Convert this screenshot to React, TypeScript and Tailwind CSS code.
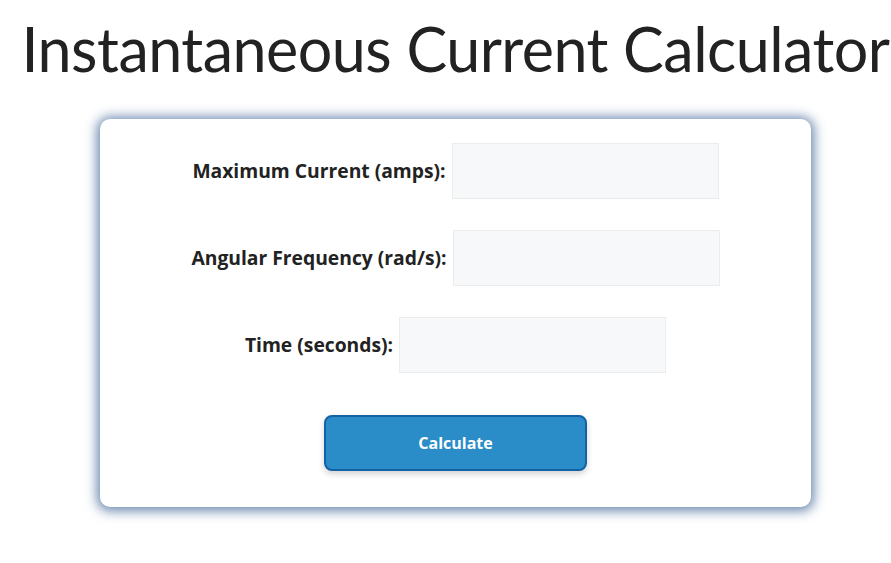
export default function App() {
  const fields = [
    { label: 'Maximum Current (amps):' },
    { label: 'Angular Frequency (rad/s):' },
    { label: 'Time (seconds):' },
  ]

  return (
    <div className="min-h-screen bg-white pl-[20px] font-['Open_Sans',sans-serif] text-[#222]">
      {/* タイトル */}
      <h1 className="pt-[13px] text-center font-['Lato',sans-serif] text-[61px] font-normal tracking-[-0.5px] leading-[72px] whitespace-nowrap">
        Instantaneous Current Calculator
      </h1>

      {/* 入力カード */}
      <div className="mx-auto mt-[34px] w-[711px] rounded-[10px] bg-white px-6 pt-[24px] pb-[36px] shadow-[0_1px_12px_3px_rgba(80,115,160,0.85)]">
        <div className="flex flex-col gap-[31px]">
          {fields.map((f) => (
            <div key={f.label} className="flex items-center justify-center gap-[6px]">
              <label className="text-[19.3px] font-bold">{f.label}</label>
              <input
                type="text"
                className="h-[56px] w-[267px] border border-[#ececec] bg-[#f7f8fa] outline-none"
              />
            </div>
          ))}
        </div>

        <div className="mt-[42px] flex justify-center">
          <button
            type="button"
            className="h-[56px] w-[263px] rounded-[8px] border-2 border-[#1462a6] bg-[#2a8dc8] text-[16px] font-bold text-white shadow-[0_3px_6px_rgba(0,0,0,0.18)]"
          >
            Calculate
          </button>
        </div>
      </div>
    </div>
  )
}
